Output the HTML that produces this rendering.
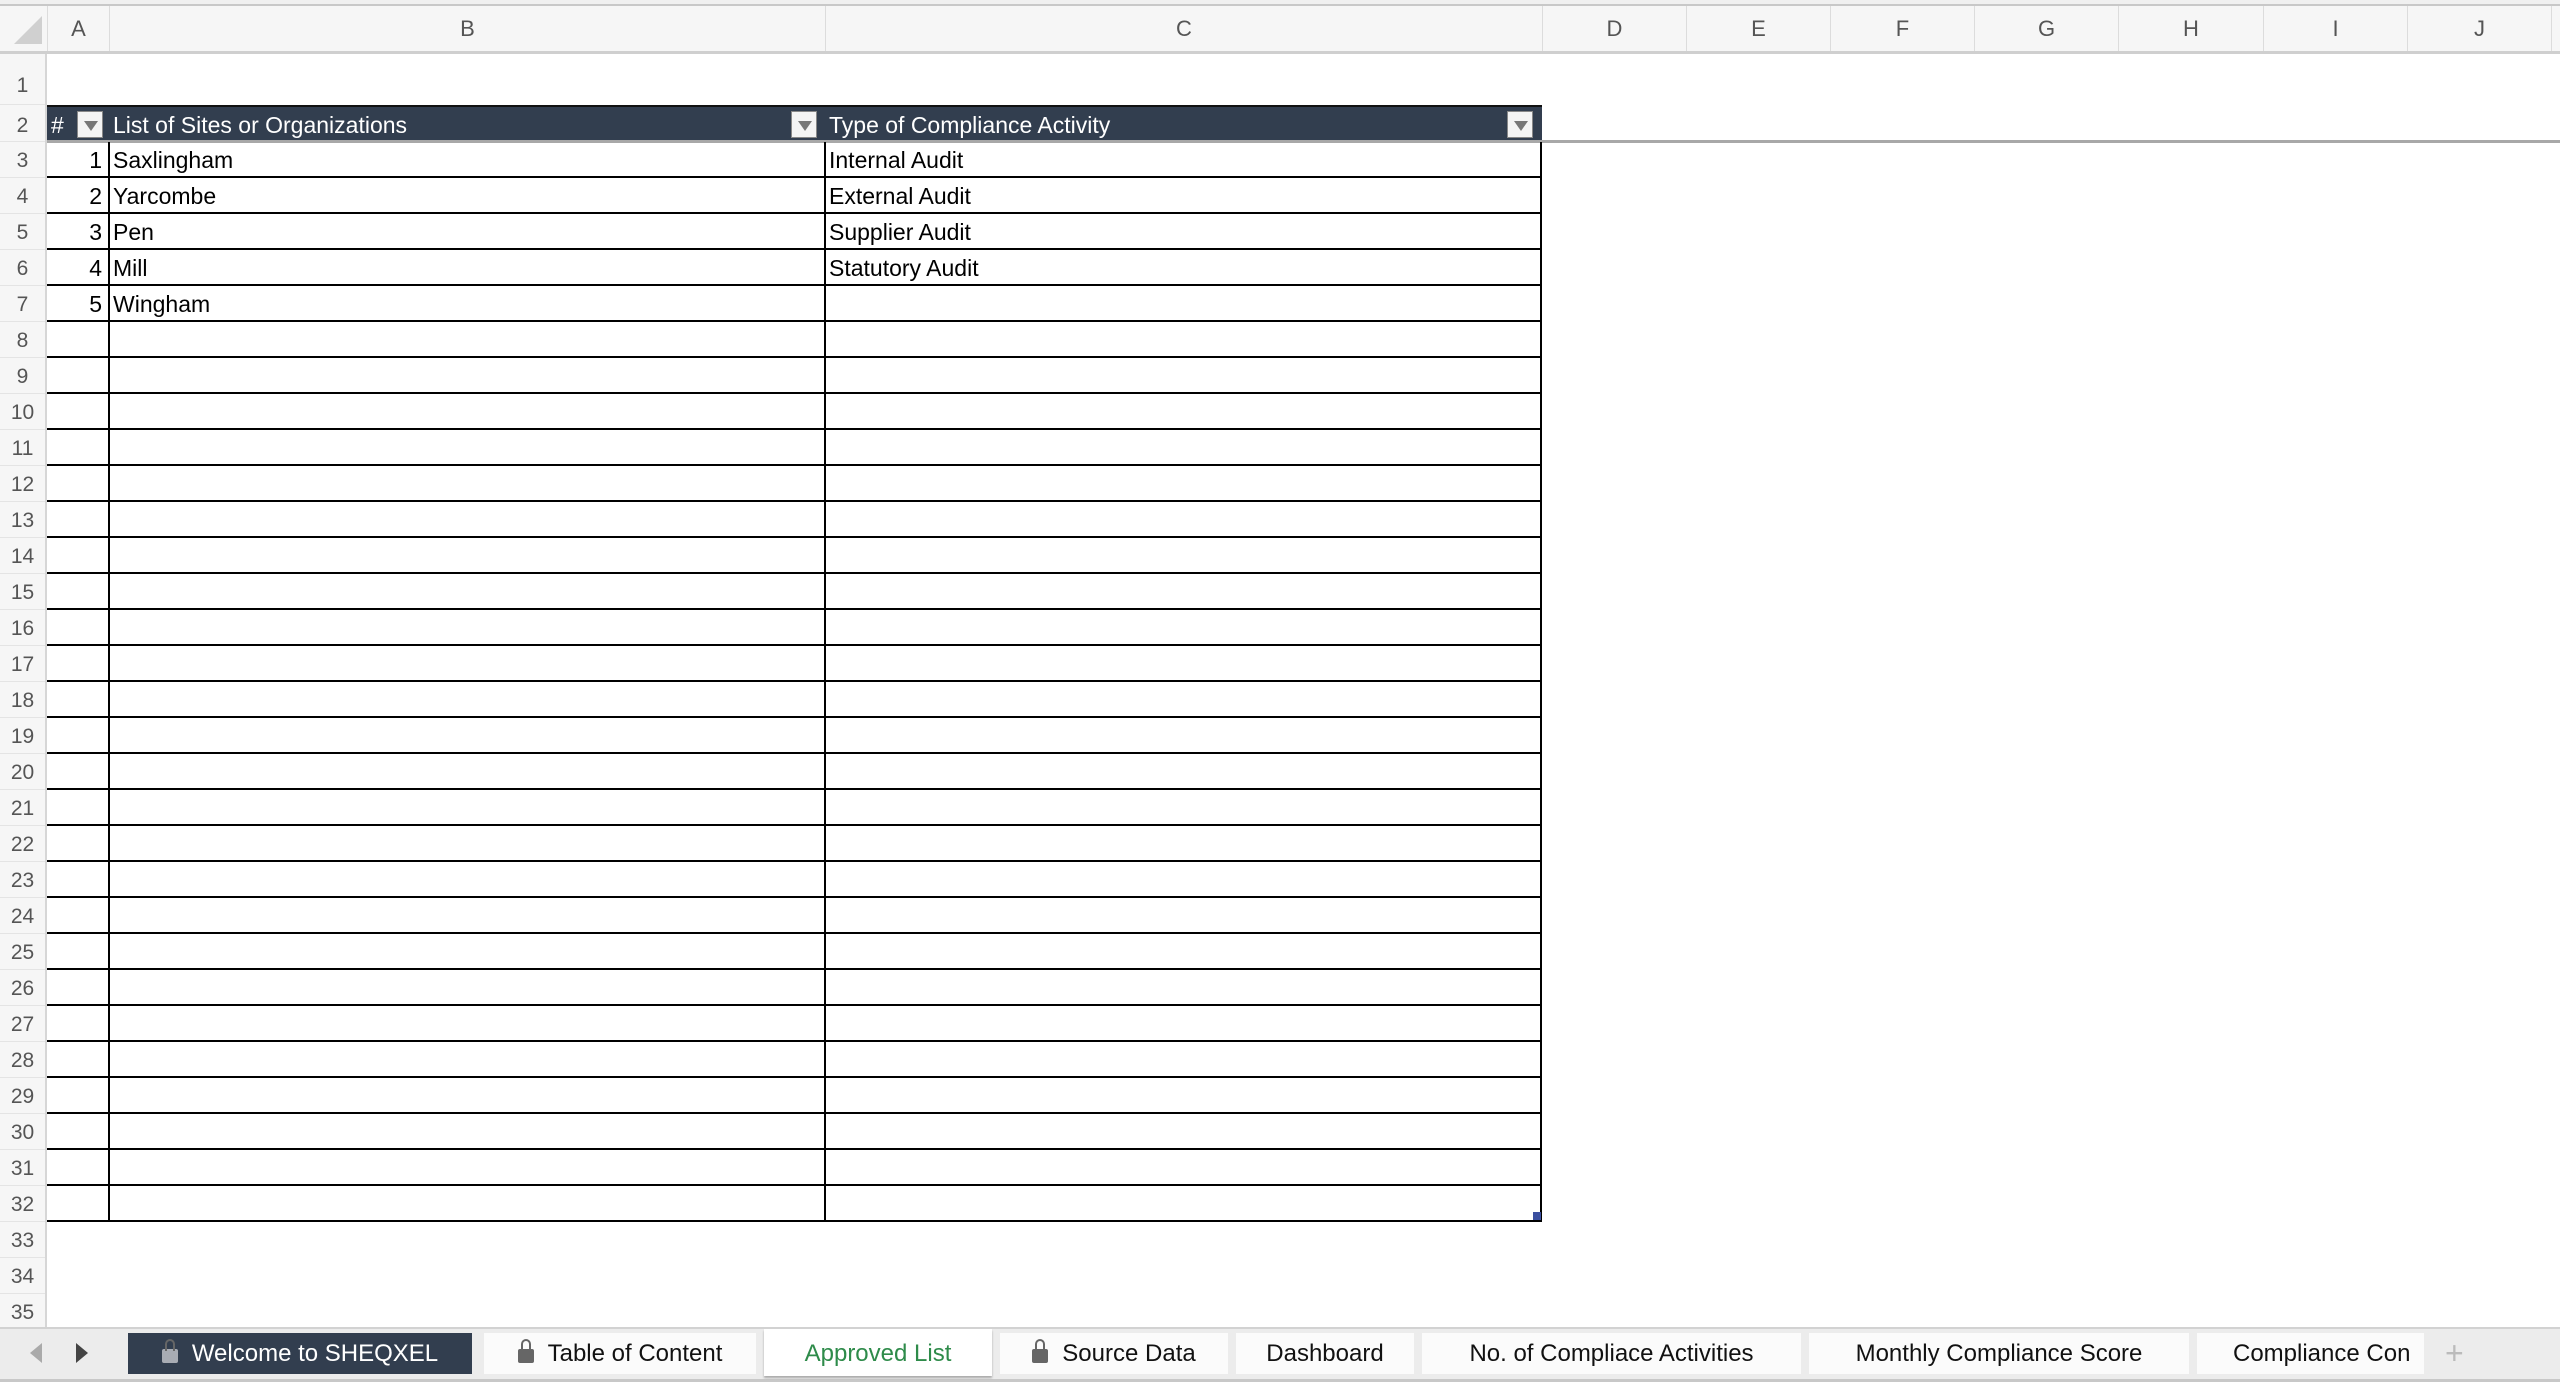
<!DOCTYPE html>
<html><head><meta charset="utf-8"><style>
*{margin:0;padding:0;box-sizing:border-box}
body{width:2560px;height:1382px;overflow:hidden;background:#fff;position:relative;font-family:"Liberation Sans Narrow","Liberation Sans",sans-serif}
.abs{position:absolute}
#top{left:0;top:0;width:2560px;height:6px;background:#f0f0f0;border-bottom:2px solid #c8c8c8}
#colh{left:0;top:6px;width:2560px;height:48px;background:#f6f6f6;border-bottom:3px solid #cfcfcf}
.ch{position:absolute;top:0;height:45px;line-height:45px;text-align:center;font-family:"Liberation Sans",sans-serif;font-size:22px;color:#555;border-left:1px solid #dcdcdc}
#rowh{left:0;top:54px;width:47px;height:1274px;background:#f6f6f6;border-right:2px solid #d6d6d6}
.rn{position:absolute;left:0;width:45px;text-align:center;font-family:"Liberation Sans",sans-serif;font-size:21px;color:#555;border-bottom:1px solid #e4e4e4}
#hdr{left:47px;top:105px;width:1495px;height:37px;background:#323e4f;color:#fff;font-size:23px;border-top:2px solid #111}
.hc{position:absolute;top:0;height:35px;line-height:37px;padding-left:4px}
.dd{position:absolute;top:4px;width:26px;height:27px;background:#f4f4f4;border:1px solid #888}
.dd:after{content:"";position:absolute;left:6px;top:9px;border-left:7px solid transparent;border-right:7px solid transparent;border-top:10px solid #777}
#body{left:47px;top:142px;width:1495px;height:1080px;border-right:2px solid #000}
.r{height:36px;border-bottom:2px solid #000;position:relative;font-size:23px;line-height:36px;color:#000}
.v{position:absolute;top:142px;width:2px;height:1080px;background:#000}
.t{position:absolute;top:0}
#tabs{left:0;top:1327px;width:2560px;height:55px;background:#ececec;border-top:2px solid #d2d2d2;border-bottom:3px solid #c8c8c8}
.tab{position:absolute;top:4px;height:41px;line-height:41px;background:#fbfbfb;font-family:"Liberation Sans",sans-serif;font-size:24px;color:#111;text-align:center}
.lock{display:inline-block;width:16px;height:14px;background:#666;border-radius:2px;position:relative;margin-right:14px;vertical-align:-2px}
.lock:before{content:"";position:absolute;left:3px;top:-10px;width:6px;height:10px;border:2px solid #666;border-bottom:none;border-radius:6px 6px 0 0}
</style></head><body>
<div id="top" class="abs"></div>
<div id="colh" class="abs">
<div class="abs" style="left:14px;top:10px;width:0;height:0;border-left:28px solid transparent;border-bottom:28px solid #d0d0d0"></div>
<div class="ch" style="left:47px;width:62px">A</div>
<div class="ch" style="left:109px;width:716px">B</div>
<div class="ch" style="left:825px;width:717px">C</div>
<div class="ch" style="left:1542px;width:144px">D</div>
<div class="ch" style="left:1686px;width:144px">E</div>
<div class="ch" style="left:1830px;width:144px">F</div>
<div class="ch" style="left:1974px;width:144px">G</div>
<div class="ch" style="left:2118px;width:145px">H</div>
<div class="ch" style="left:2263px;width:144px">I</div>
<div class="ch" style="left:2407px;width:144px">J</div>
<div class="ch" style="left:2551px;width:9px"></div>
</div>
<div id="rowh" class="abs">
<div class="rn" style="top:0;height:51px;line-height:64px">1</div>
<div class="rn" style="top:51px;height:37px;line-height:42px">2</div>
<div class="rn" style="top:88px;height:36px;line-height:38px">3</div>
<div class="rn" style="top:124px;height:36px;line-height:38px">4</div>
<div class="rn" style="top:160px;height:36px;line-height:38px">5</div>
<div class="rn" style="top:196px;height:36px;line-height:38px">6</div>
<div class="rn" style="top:232px;height:36px;line-height:38px">7</div>
<div class="rn" style="top:268px;height:36px;line-height:38px">8</div>
<div class="rn" style="top:304px;height:36px;line-height:38px">9</div>
<div class="rn" style="top:340px;height:36px;line-height:38px">10</div>
<div class="rn" style="top:376px;height:36px;line-height:38px">11</div>
<div class="rn" style="top:412px;height:36px;line-height:38px">12</div>
<div class="rn" style="top:448px;height:36px;line-height:38px">13</div>
<div class="rn" style="top:484px;height:36px;line-height:38px">14</div>
<div class="rn" style="top:520px;height:36px;line-height:38px">15</div>
<div class="rn" style="top:556px;height:36px;line-height:38px">16</div>
<div class="rn" style="top:592px;height:36px;line-height:38px">17</div>
<div class="rn" style="top:628px;height:36px;line-height:38px">18</div>
<div class="rn" style="top:664px;height:36px;line-height:38px">19</div>
<div class="rn" style="top:700px;height:36px;line-height:38px">20</div>
<div class="rn" style="top:736px;height:36px;line-height:38px">21</div>
<div class="rn" style="top:772px;height:36px;line-height:38px">22</div>
<div class="rn" style="top:808px;height:36px;line-height:38px">23</div>
<div class="rn" style="top:844px;height:36px;line-height:38px">24</div>
<div class="rn" style="top:880px;height:36px;line-height:38px">25</div>
<div class="rn" style="top:916px;height:36px;line-height:38px">26</div>
<div class="rn" style="top:952px;height:36px;line-height:38px">27</div>
<div class="rn" style="top:988px;height:36px;line-height:38px">28</div>
<div class="rn" style="top:1024px;height:36px;line-height:38px">29</div>
<div class="rn" style="top:1060px;height:36px;line-height:38px">30</div>
<div class="rn" style="top:1096px;height:36px;line-height:38px">31</div>
<div class="rn" style="top:1132px;height:36px;line-height:38px">32</div>
<div class="rn" style="top:1168px;height:36px;line-height:38px">33</div>
<div class="rn" style="top:1204px;height:36px;line-height:38px">34</div>
<div class="rn" style="top:1240px;height:34px;line-height:38px">35</div>
</div>
<div class="abs" style="left:1542px;top:140px;width:1018px;height:3px;background:#a8a8a8"></div>
<div id="hdr" class="abs">
<div class="hc" style="left:0">#</div>
<div class="dd" style="left:30px"></div>
<div class="hc" style="left:62px">List of Sites or Organizations</div>
<div class="dd" style="left:744px"></div>
<div class="hc" style="left:778px">Type of Compliance Activity</div>
<div class="dd" style="left:1460px"></div>
</div>
<div class="abs" style="left:47px;top:140px;width:1495px;height:3px;background:#a8a8a8"></div>
<div id="body" class="abs">
<div class="r"><span class="t" style="right:1438px">1</span><span class="t" style="left:66px">Saxlingham</span><span class="t" style="left:782px">Internal Audit</span></div>
<div class="r"><span class="t" style="right:1438px">2</span><span class="t" style="left:66px">Yarcombe</span><span class="t" style="left:782px">External Audit</span></div>
<div class="r"><span class="t" style="right:1438px">3</span><span class="t" style="left:66px">Pen</span><span class="t" style="left:782px">Supplier Audit</span></div>
<div class="r"><span class="t" style="right:1438px">4</span><span class="t" style="left:66px">Mill</span><span class="t" style="left:782px">Statutory Audit</span></div>
<div class="r"><span class="t" style="right:1438px">5</span><span class="t" style="left:66px">Wingham</span></div>
<div class="r"></div><div class="r"></div><div class="r"></div><div class="r"></div><div class="r"></div>
<div class="r"></div><div class="r"></div><div class="r"></div><div class="r"></div><div class="r"></div>
<div class="r"></div><div class="r"></div><div class="r"></div><div class="r"></div><div class="r"></div>
<div class="r"></div><div class="r"></div><div class="r"></div><div class="r"></div><div class="r"></div>
<div class="r"></div><div class="r"></div><div class="r"></div><div class="r"></div><div class="r"></div>
</div>
<div class="v" style="left:108px"></div>
<div class="v" style="left:824px"></div>
<div class="abs" style="left:1533px;top:1212px;width:8px;height:8px;background:#3b4fa0"></div>
<div id="tabs" class="abs">
<div class="abs" style="left:30px;top:14px;border-right:12px solid #aaa;border-top:10px solid transparent;border-bottom:10px solid transparent"></div>
<div class="abs" style="left:76px;top:14px;border-left:12px solid #444;border-top:10px solid transparent;border-bottom:10px solid transparent"></div>
<div class="tab" style="left:128px;width:344px;background:#323e4f;color:#fff"><span class="lock" style="background:#a8acb4"></span>Welcome to SHEQXEL</div>
<div class="tab" style="left:484px;width:272px"><span class="lock"></span>Table of Content</div>
<div class="tab" style="left:764px;width:228px;top:0;height:47px;line-height:49px;background:#fff;color:#2e8b4a;box-shadow:0 2px 2px #aaa">Approved List</div>
<div class="tab" style="left:1000px;width:228px"><span class="lock"></span>Source Data</div>
<div class="tab" style="left:1236px;width:178px">Dashboard</div>
<div class="tab" style="left:1422px;width:379px">No. of Compliace Activities</div>
<div class="tab" style="left:1809px;width:380px">Monthly Compliance Score</div>
<div class="tab" style="left:2197px;width:227px;text-align:left;padding-left:36px;overflow:hidden;white-space:nowrap">Compliance Con</div>
<div class="abs" style="left:2445px;top:6px;font-family:'Liberation Sans',sans-serif;font-size:32px;color:#bbb">+</div>
</div>
</body></html>
